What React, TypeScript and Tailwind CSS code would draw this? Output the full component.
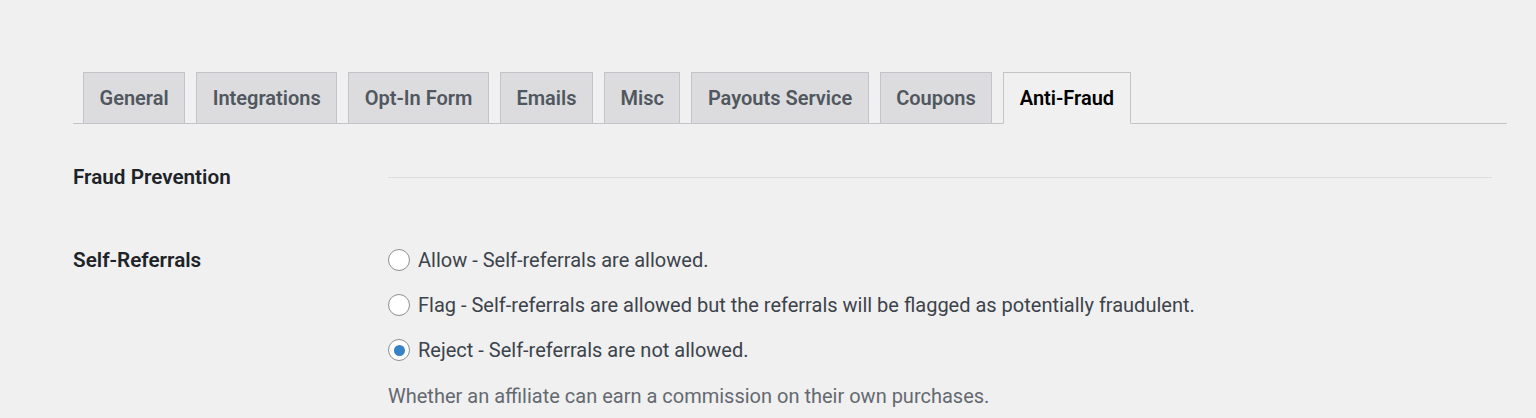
import { useState } from 'react'

const TABS = ['General', 'Integrations', 'Opt-In Form', 'Emails', 'Misc', 'Payouts Service', 'Coupons', 'Anti-Fraud']

const OPTIONS = [
  { value: 'allow', label: 'Allow - Self-referrals are allowed.' },
  { value: 'flag', label: 'Flag - Self-referrals are allowed but the referrals will be flagged as potentially fraudulent.' },
  { value: 'reject', label: 'Reject - Self-referrals are not allowed.' },
]

export default function App() {
  const [active, setActive] = useState('Anti-Fraud')
  const [selected, setSelected] = useState('reject')

  return (
    <div className="min-h-screen bg-[#f0f0f1] pt-[72px] pl-[73px] pr-[29px] font-['Roboto',sans-serif] text-[#3c434a]">
      {/* Tabs */}
      <nav className="flex items-end gap-[11px] border-b border-[#c3c4c7] pl-[10px]">
        {TABS.map(tab => {
          const isActive = tab === active
          return (
            <button
              key={tab}
              onClick={() => setActive(tab)}
              className={
                isActive
                  ? 'h-[52px] -mb-px px-[15.5px] border border-[#c3c4c7] border-b-[#f0f0f1] bg-[#f0f0f1] text-[20px] font-semibold text-black leading-[24px]'
                  : 'h-[52px] -mb-px px-[15.5px] border border-[#c3c4c7] bg-[#dcdcde] text-[20px] font-semibold text-[#50575e] leading-[24px]'
              }
            >
              {tab}
            </button>
          )
        })}
      </nav>

      {/* Fraud Prevention */}
      <div className="flex items-center pt-[41px]">
        <h2 className="w-[315px] shrink-0 text-[20.7px] leading-[24px] font-semibold text-[#1d2327]">Fraud Prevention</h2>
        <div className="flex-1 mr-[15px] border-t border-[#dcdcde]" />
      </div>

      {/* Self-Referrals */}
      <div className="flex mt-[59px]">
        <div className="w-[315px] shrink-0 text-[20.7px] leading-[24px] font-semibold text-[#1d2327]">Self-Referrals</div>
        <div className="flex flex-col gap-[21px]">
          {OPTIONS.map(opt => {
            const checked = opt.value === selected
            return (
              <label key={opt.value} className="flex items-center h-[24px] text-[20px] leading-[24px] cursor-pointer">
                <input
                  type="radio"
                  name="self_referrals"
                  className="sr-only"
                  checked={checked}
                  onChange={() => setSelected(opt.value)}
                />
                <span className="w-[22px] h-[22px] mr-[8px] rounded-full border border-[#8c8f94] bg-white flex items-center justify-center shrink-0">
                  {checked && <span className="w-[11px] h-[11px] rounded-full bg-[#3582c4]" />}
                </span>
                {opt.label}
              </label>
            )
          })}
          <p className="h-[24px] text-[20px] leading-[24px] text-[#646970] mt-[1px]">
            Whether an affiliate can earn a commission on their own purchases.
          </p>
        </div>
      </div>
    </div>
  )
}
